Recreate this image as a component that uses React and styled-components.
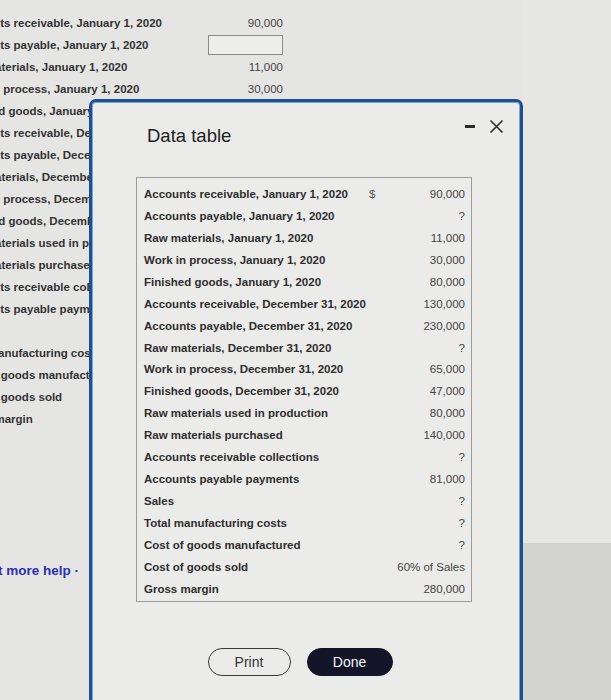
import styled, { createGlobalStyle } from "styled-components";

const GlobalStyle = createGlobalStyle`
  html, body {
    margin: 0;
    padding: 0;
    height: 700px;
    overflow: hidden;
    background: #e5e5e3;
    font-family: "Liberation Sans", Arial, sans-serif;
  }
`;

// rows of the worksheet behind the dialog; values under the dialog are not shown
const backgroundRows = [
  { label: "Accounts receivable, January 1, 2020", value: "90,000" },
  { label: "Accounts payable, January 1, 2020", input: true },
  { label: "Raw materials, January 1, 2020", value: "11,000" },
  { label: "Work in process, January 1, 2020", value: "30,000" },
  { label: "Finished goods, January 1, 2020" },
  { label: "Accounts receivable, December 31, 2020" },
  { label: "Accounts payable, December 31, 2020" },
  { label: "Raw materials, December 31, 2020" },
  { label: "Work in process, December 31, 2020" },
  { label: "Finished goods, December 31, 2020" },
  { label: "Raw materials used in production" },
  { label: "Raw materials purchased" },
  { label: "Accounts receivable collections" },
  { label: "Accounts payable payments" },
  { label: "" },
  { label: "Total manufacturing costs" },
  { label: "Cost of goods manufactured" },
  { label: "Cost of goods sold" },
  { label: "Gross margin" },
];

const tableRows = [
  ["Accounts receivable, January 1, 2020", "$", "90,000"],
  ["Accounts payable, January 1, 2020", "", "?"],
  ["Raw materials, January 1, 2020", "", "11,000"],
  ["Work in process, January 1, 2020", "", "30,000"],
  ["Finished goods, January 1, 2020", "", "80,000"],
  ["Accounts receivable, December 31, 2020", "", "130,000"],
  ["Accounts payable, December 31, 2020", "", "230,000"],
  ["Raw materials, December 31, 2020", "", "?"],
  ["Work in process, December 31, 2020", "", "65,000"],
  ["Finished goods, December 31, 2020", "", "47,000"],
  ["Raw materials used in production", "", "80,000"],
  ["Raw materials purchased", "", "140,000"],
  ["Accounts receivable collections", "", "?"],
  ["Accounts payable payments", "", "81,000"],
  ["Sales", "", "?"],
  ["Total manufacturing costs", "", "?"],
  ["Cost of goods manufactured", "", "?"],
  ["Cost of goods sold", "", "60% of Sales"],
  ["Gross margin", "", "280,000"],
];

const App = () => {
  return (
    <>
      <GlobalStyle />
      <Page>
        <Worksheet>
          <Sheet>
            {backgroundRows.map((row, i) => (
              <SheetRow key={i}>
                <SheetLabel>{row.label}</SheetLabel>
                {row.input ? <AnswerBox /> : <SheetValue>{row.value}</SheetValue>}
              </SheetRow>
            ))}
          </Sheet>
          <HelpLink>Get more help ·</HelpLink>
        </Worksheet>
        <SidePane />

        <Dialog>
          <DialogHeader>
            <Title>Data table</Title>
            <WindowControls>
              <MinimizeIcon />
              <svg width="15" height="15" viewBox="0 0 15 15">
                <path d="M1.5 1.5 L13.5 13.5 M13.5 1.5 L1.5 13.5" stroke="#2d2d2d" strokeWidth="1.6" fill="none" />
              </svg>
            </WindowControls>
          </DialogHeader>

          <DataTable>
            {tableRows.map(([label, cur, value], i) => (
              <DataRow key={i}>
                <DataLabel>{label}</DataLabel>
                <Currency>{cur}</Currency>
                <DataValue>{value}</DataValue>
              </DataRow>
            ))}
          </DataTable>

          <Actions>
            <Button>Print</Button>
            <Button $primary>Done</Button>
          </Actions>
        </Dialog>
      </Page>
    </>
  );
};

const Page = styled.div`
  position: relative;
  display: flex;
  height: 700px;
  overflow: hidden;
`;

const Worksheet = styled.div`
  flex: 1;
  padding-top: 12px;
  margin-left: -42px;
`;

const Sheet = styled.div`
  display: flex;
  flex-direction: column;
`;

const SheetRow = styled.div`
  display: grid;
  grid-template-columns: 250px 75px;
  align-items: center;
  height: 22px;
`;

const SheetLabel = styled.span`
  font-size: 11.5px;
  font-weight: bold;
  color: #333;
  white-space: nowrap;
`;

const SheetValue = styled.span`
  font-size: 11.5px;
  color: #444;
  text-align: right;
`;

const AnswerBox = styled.div`
  height: 18px;
  border: 1px solid #8a8a8a;
  background: #ededeb;
`;

const HelpLink = styled.div`
  margin: 133px 0 0 22px;
  font-size: 13.5px;
  font-weight: bold;
  color: #2f2fb4;
  white-space: nowrap;
`;

const SidePane = styled.div`
  width: 89px;
  background: linear-gradient(to bottom, #e6e6e4 0, #e6e6e4 543px, #d3d3d2 543px);
`;

const Dialog = styled.div`
  position: absolute;
  left: 89px;
  top: 99px;
  width: 428px;
  height: 640px;
  background: #ebebe9;
  border: 3px solid #1f4f8e;
  border-radius: 7px;
  box-shadow: inset 0 0 0 1px #7aa6d8;
  display: flex;
  flex-direction: column;
`;

const DialogHeader = styled.div`
  display: flex;
  justify-content: space-between;
  align-items: flex-start;
  padding: 17px 16px 0 55px;
  height: 58px;
  box-sizing: border-box;
`;

const Title = styled.h2`
  margin: 6px 0 0;
  font-size: 18.5px;
  font-weight: normal;
  color: #222;
`;

const WindowControls = styled.div`
  display: flex;
  align-items: center;
  gap: 14px;
`;

const MinimizeIcon = styled.span`
  display: block;
  width: 10px;
  height: 3px;
  background: #2d2d2d;
`;

const DataTable = styled.div`
  margin: 17px 0 0 44px;
  width: 336px;
  box-sizing: border-box;
  border: 1px solid #9b9b9b;
  padding: 5px 0 1px;
  display: flex;
  flex-direction: column;
`;

const DataRow = styled.div`
  display: grid;
  grid-template-columns: 225px 12px 84px;
  align-items: center;
  height: 21.95px;
  padding: 0 7px 0 7px;
`;

const DataLabel = styled.span`
  font-size: 11.5px;
  font-weight: bold;
  color: #2e2e2e;
  white-space: nowrap;
`;

const Currency = styled.span`
  font-size: 11.5px;
  color: #555;
`;

const DataValue = styled.span`
  font-size: 11.5px;
  color: #444;
  text-align: right;
  white-space: nowrap;
`;

const Actions = styled.div`
  display: flex;
  justify-content: center;
  gap: 16px;
  margin-top: 46px;
  padding-right: 12px;
`;

const Button = styled.button`
  width: ${(p) => (p.$primary ? "86px" : "83px")};
  height: 28px;
  border-radius: 14px;
  font-family: "Liberation Sans", Arial, sans-serif;
  font-size: 14px;
  border: 1.5px solid ${(p) => (p.$primary ? "#15152a" : "#3a3a3a")};
  background: ${(p) => (p.$primary ? "#15152a" : "transparent")};
  color: ${(p) => (p.$primary ? "#f4f4f4" : "#333")};
  cursor: pointer;
`;

export default App;
